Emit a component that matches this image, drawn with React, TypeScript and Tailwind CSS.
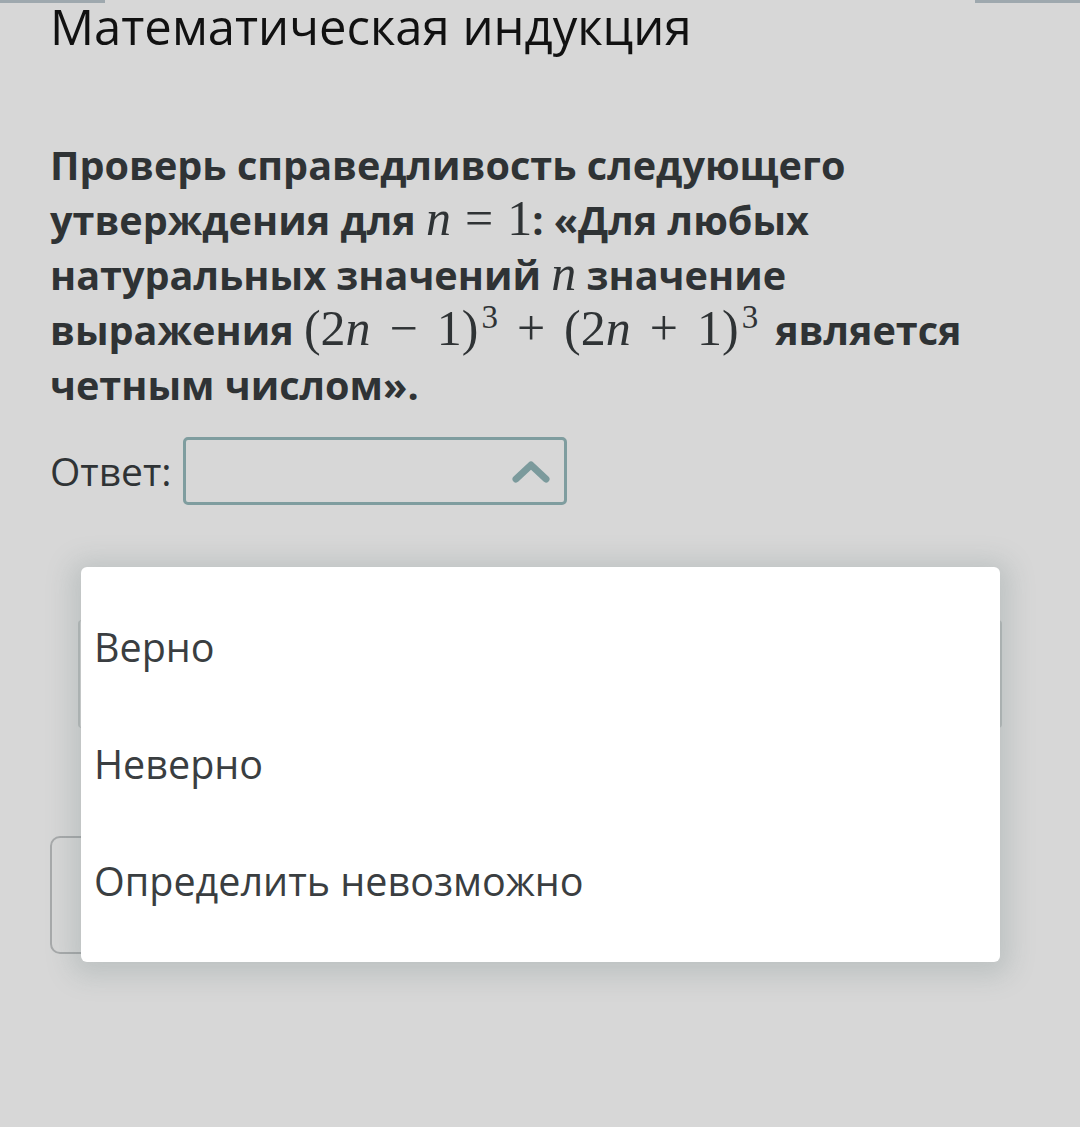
import React from "react";

const sans = { fontFamily: '"Open Sans", "Noto Sans", sans-serif' };

function M({ children }: { children: React.ReactNode }) {
  return (
    <span className="text-[50px] leading-none whitespace-nowrap" style={{ fontFamily: '"Liberation Serif", serif', fontWeight: 400 }}>
      {children}
    </span>
  );
}

function I({ children }: { children: React.ReactNode }) {
  return <i className="italic">{children}</i>;
}

function Op({ children }: { children: React.ReactNode }) {
  return <span className="mx-[19px]">{children}</span>;
}

function Sup() {
  return <span className="relative -top-[17px] text-[33px] leading-none ml-[3px]">3</span>;
}

export default function App() {
  return (
    <div className="relative w-[1080px] h-[1127px] bg-[#d7d7d7] overflow-hidden" style={sans}>
      <div className="absolute left-0 top-0 w-[105px] h-[3px] bg-[#9ea8ae]" />
      <div className="absolute right-0 top-0 w-[105px] h-[3px] bg-[#9ea8ae]" />

      <div className="pl-[50px] pt-[1px]">
        <h1 className="text-[49px] leading-[50px] text-[#111] font-normal whitespace-nowrap">
          Математическая индукция
        </h1>

        <p className="mt-[87px] text-[39.6px] leading-[55px] font-bold text-[#2f3335] whitespace-nowrap">
          Проверь справедливость следующего
          <br />
          утверждения для{" "}
          <M>
            <I>n</I>
            <span className="mx-[14px]">=</span>1
          </M>
          : «Для любых
          <br />
          натуральных значений <M><I>n</I></M> значение
          <br />
          выражения{" "}
          <M>
            (2<I>n</I>
            <Op>−</Op>1)
            <Sup />
            <Op>+</Op>
            (2<I>n</I>
            <Op>+</Op>1)
            <Sup />
          </M>
          <span className="ml-[17px]">является</span>
          <br />
          четным числом».
        </p>

        <div className="mt-[24px] flex items-center gap-[11px]">
          <span className="text-[39px] text-[#2f3335]">Ответ:</span>
          <div className="w-[384px] h-[68px] rounded-[5px] border-[3px] border-[#7f9d9f] flex items-center justify-end pr-[14px]">
            <svg width="38" height="24" viewBox="0 0 38 24" fill="none">
              <path d="M4 20 L19 6 L34 20" stroke="#7b9a9c" strokeWidth="7" strokeLinecap="round" strokeLinejoin="round" />
            </svg>
          </div>
        </div>

        <div className="mt-[115px] ml-[28px] w-[924px] h-[108px] border-x-2 border-[#b9bcbc] rounded-[4px]" />
        <div className="mt-[108px] w-[300px] h-[118px] rounded-[10px] border-2 border-[#a7a9aa]" />
      </div>

      <div className="absolute left-[81px] top-[567px] w-[919px] h-[395px] bg-white rounded-[6px] shadow-[0_4px_26px_10px_rgba(100,125,125,0.22)] py-[22px] flex flex-col">
        {["Верно", "Неверно", "Определить невозможно"].map((t) => (
          <div key={t} className="h-[117px] flex items-center pl-[13px] text-[39.5px] text-[#3a3e41]">
            {t}
          </div>
        ))}
      </div>
    </div>
  );
}
